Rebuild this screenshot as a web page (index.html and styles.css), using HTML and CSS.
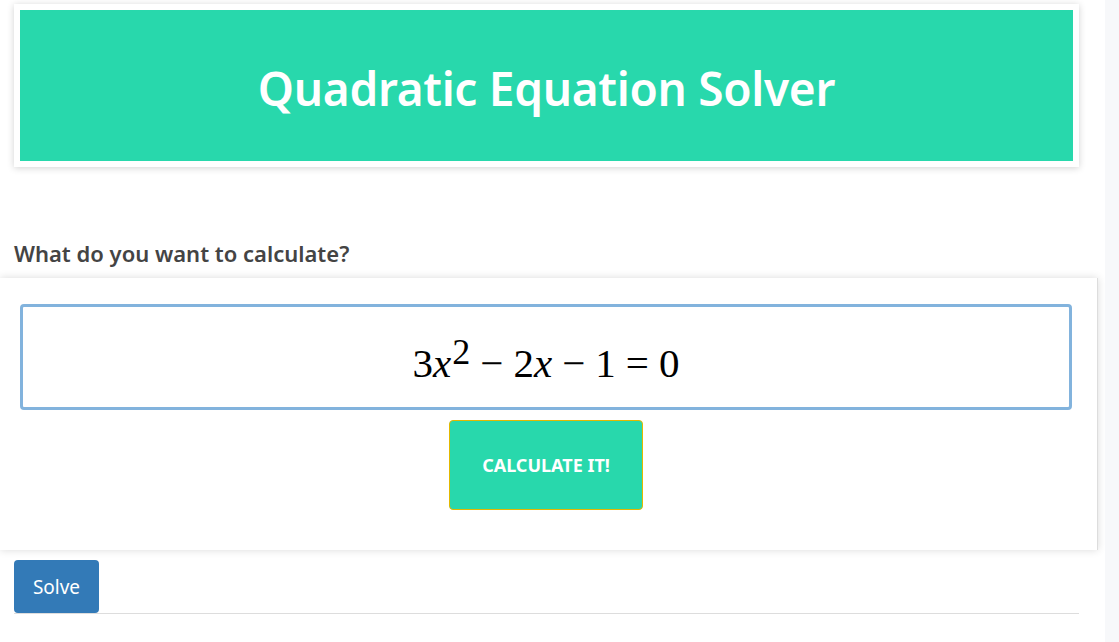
FILE: index.html
```html
<!DOCTYPE html>
<html lang="en">

<head>
    <meta charset="UTF-8">
    <title>Quadratic Equation Solver</title>
    <link rel="stylesheet" href="styles.css">
</head>

<body>
    <main class="side">
        <header class="hero">
            <div class="hero-inner">
                <h1>Quadratic Equation Solver</h1>
            </div>
        </header>

        <h2 class="question">What do you want to calculate?</h2>

        <section class="panel">
            <div class="equation">
                <span class="math">3<i>x</i><sup>2</sup><span class="op">−</span>2<i>x</i><span class="op">−</span>1<span class="op">=</span>0</span>
            </div>
            <div class="actions">
                <button class="calc">Calculate it!</button>
            </div>
        </section>

        <button class="solve">Solve</button>
        <hr>
    </main>
    <div class="track"></div>
</body>

</html>
```

FILE: styles.css
```css
body {
    margin: 0;
    display: flex;
    min-height: 642px;
    background-color: white;
    font-family: "Noto Sans", "Open Sans", sans-serif;
}

.side {
    flex: 1;
}

.track {
    width: 14px;
    background-color: #f7f8fa;
}

.hero {
    margin: 4px 26px 0 14px;
    padding: 6px;
    background-color: white;
    box-shadow: 0 1px 7px rgba(0, 0, 0, 0.18);
}

.hero-inner {
    height: 151px;
    padding-top: 4px;
    box-sizing: border-box;
    background-color: #28d8ac;
    display: flex;
    align-items: center;
    justify-content: center;
}

h1 {
    margin: 0;
    color: white;
    font-size: 46px;
    font-weight: 600;
    letter-spacing: -0.3px;
}

.question {
    margin: 72px 0 11px 14px;
    font-size: 22px;
    font-weight: 600;
    color: #444;
    line-height: 28px;
}

.panel {
    margin-right: 7px;
    padding: 26px 25px 40px 20px;
    background-color: white;
    border-right: 1px solid #ddd;
    box-shadow: 0 0 8px rgba(0, 0, 0, 0.15);
}

.equation {
    height: 100px;
    border: 3px solid #82b3dd;
    border-radius: 4px;
    display: flex;
    align-items: center;
    justify-content: center;
}

.math {
    font-family: "Liberation Serif", serif;
    font-size: 41px;
    color: black;
    padding-top: 12px;
}

.math sup {
    font-size: 0.88em;
    vertical-align: 13px;
    line-height: 0;
    margin-left: 1px;
}

.op {
    margin: 0 10px;
}

.actions {
    margin-top: 10px;
    display: flex;
    justify-content: center;
}

.calc {
    width: 194px;
    height: 90px;
    border: 1px solid #e3b800;
    border-radius: 4px;
    background-color: #28d8ac;
    color: white;
    font-family: inherit;
    font-size: 18px;
    font-weight: 700;
    text-transform: uppercase;
}

.solve {
    display: block;
    margin: 10px 0 0 14px;
    width: 85px;
    height: 53px;
    border: none;
    border-radius: 4px;
    background-color: #337ab7;
    color: white;
    font-family: inherit;
    font-size: 19px;
}

hr {
    margin: 0 26px 0 14px;
    border: none;
    border-top: 1px solid #ddd;
}
```
